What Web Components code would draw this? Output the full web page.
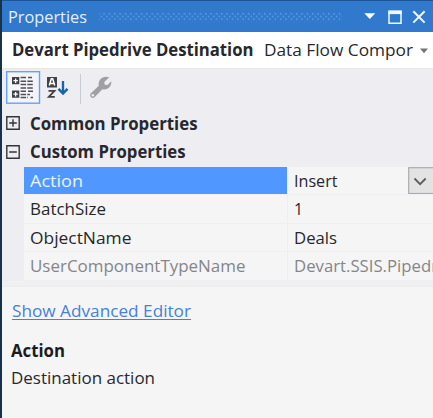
<!DOCTYPE html>
<html lang="en">
<head>
<meta charset="utf-8">
<title>Properties</title>
<style>
html,body{margin:0;width:433px;height:418px;overflow:hidden;font-family:"Open Sans","Noto Sans",sans-serif;font-size:17px;color:#28282c;background:#f5f5f5}
</style>
</head>
<body>
<properties-window></properties-window>
<script>
// A line of text condensed horizontally to the given width.
class FitText extends HTMLElement {
  connectedCallback() {
    this.attachShadow({mode:'open'}).innerHTML = `<style>
      :host{display:block;white-space:nowrap;height:24px;line-height:24px;flex:none;width:${this.getAttribute('w')}px}
      span{display:inline-block;transform-origin:0 50%}
      </style><span><slot></slot></span>`;
    const s = this.shadowRoot.querySelector('span');
    s.style.transform = `scaleX(${this.getAttribute('w') / s.getBoundingClientRect().width})`;
  }
}

class TitleBar extends HTMLElement {
  constructor() {
    super();
    this.attachShadow({mode:'open'}).innerHTML = `<style>
      :host{display:flex;box-sizing:border-box;height:32px;border-top:1px solid #1d5596;background:#3079cd;color:#e4f0ff;padding-left:6px;align-items:center}
      svg{display:block;flex:none}
      .grip{margin-left:11px}
      </style>
      <fit-text w="79">Properties</fit-text>
      <svg class="grip" width="256" height="30"><defs><pattern id="d" width="5.35" height="5.35" patternUnits="userSpaceOnUse" patternTransform="translate(0,11)"><rect width="1.5" height="1.5" fill="#629ddd"/><rect x="2.67" y="2.67" width="1.5" height="1.5" fill="#629ddd"/></pattern></defs><rect y="11" x="1" width="243" height="8.2" fill="url(#d)"/></svg>
      <svg width="79" height="30" fill="none" stroke="#f2f8ff"><path d="M10.3 11.2h11l-5.5 5.8z" fill="#fff" stroke="none"/><path d="M35 9.3h12v12h-12z" stroke-width="1.5"/><path d="M34.3 10.4h13.4" stroke-width="3.4"/><path d="M59.3 9.2l11.3 11.4M70.6 9.2L59.3 20.6" stroke-width="2"/></svg>`;
  }
}

class ObjectPicker extends HTMLElement {
  constructor() {
    super();
    this.attachShadow({mode:'open'}).innerHTML = `<style>
      :host{display:flex;box-sizing:border-box;height:37px;background:#fff;border-bottom:1px solid #e7e7ea;padding:6px 0 0 10px}
      b{font-weight:700}
      .type{margin-left:10px}
      svg{margin:8px 0 0 6.5px;flex:none}
      </style>
      <fit-text w="241.5"><b>Devart Pipedrive Destination</b></fit-text>
      <fit-text class="type" w="149">Data Flow Compor</fit-text>
      <svg width="12" height="12"><path d="M1 2.6h8L5 7.2z" fill="#747478"/></svg>`;
  }
}

class PropertyToolbar extends HTMLElement {
  constructor() {
    super();
    this.attachShadow({mode:'open'}).innerHTML = `<style>
      :host{display:block;height:40px;background:#eeeef2}
      svg{display:block}
      </style>
      <svg width="125" height="40" viewBox="2 69 125 40" fill="none">
        <rect x="6.7" y="71.7" width="32.8" height="31.5" fill="#f4f5fb" stroke="#62a2fb" stroke-width="1.4"/>
        <path fill="#424246" d="M12 77h7.3v7.3H12zM12 90.5h7.3v7.3H12z"/>
        <path stroke="#fff" stroke-width="1.3" d="M13.4 80.6h4.5M15.65 78.4v4.5M13.4 94.1h4.5M15.65 91.9v4.5"/>
        <path stroke="#505055" stroke-width="1.5" stroke-dasharray="5.5 1.2" d="M20.6 77.6H26M20.6 81.2H33.5M20.6 84.6H33.5M20.6 88H33.5M20.6 91.3H26M20.6 94.5H28M20.6 97.4H28"/>
        <path stroke="#505055" stroke-width="1.5" d="M28 77.6h4M28 91.3h5M28 94.5h2M30.5 97.4h2.5"/>
        <path fill="#424246" d="M47 77h10v10.5H47z"/>
        <path stroke="#fff" stroke-width="1.5" d="M49.3 85.5l2-6.7h1.4l2 6.7M50.1 83.4h3.8"/>
        <path stroke="#424246" stroke-width="1.8" d="M48.5 90.9h6l-5.7 6h6"/>
        <path stroke="#1765ad" stroke-width="2.3" d="M63 81v11.7"/>
        <path stroke="#1765ad" stroke-width="2.5" d="M58.5 88.8L63 93.4l4.5-4.6"/>
        <path stroke="#cbccd3" d="M80.5 74v30"/>
        <path fill="#a0a0a4" d="M109.3 77.2l-5 4.8.4 2.7 2.8.4 3.8-3.8c.5 5.2-3.6 9.2-8.9 8l-7.6 7.8c-2.8 2.5-6.3-1.1-3.9-3.8l7.9-7.6c-1.2-5.7 4.1-10.7 10.5-8.5z"/>
        <circle cx="92.8" cy="95.3" r="1.2" fill="#eeeef2"/>
      </svg>`;
  }
}

class PropertyCategory extends HTMLElement {
  connectedCallback() {
    const open = this.hasAttribute('open');
    this.attachShadow({mode:'open'}).innerHTML = `<style>
      :host{display:flex;height:29px;background:#eeeef2;align-items:flex-start;box-sizing:border-box;padding-left:4px}
      svg{flex:none;margin:7px 9px 0 0}
      fit-text{margin-top:${open ? 2 : 3}px}
      b{font-weight:700}
      </style><svg width="15" height="15" fill="none" stroke="#353539" stroke-width="1.4"><path d="M.8.8h12.4v12.4H.8zM3.2 7h7.6${open ? '' : 'M7 3.2v7.6'}"/></svg>
      <fit-text w="${this.getAttribute('w')}"><b><slot></slot></b></fit-text>`;
  }
}

class PropertyRow extends HTMLElement {
  connectedCallback() {
    const sel = this.hasAttribute('selected');
    this.attachShadow({mode:'open'}).innerHTML = `<style>
      :host{display:grid;grid-template-columns:22px 264px 1fr;height:28.4px;background:#f5f5f5;overflow:hidden}
      :host([disabled]){color:#858589}
      .gutter{background:#eeeef2}
      .name,.value{box-sizing:border-box;display:flex;border-bottom:1px solid #efeff2;padding-left:6px;min-width:0;overflow:hidden}
      .name{border-right:1px solid #efeff2}
      :host([selected]) .name{background:linear-gradient(#5098ff,#5098ff) 0 0/100% 27px no-repeat;color:#eaf5ff}
      fit-text{margin-top:2px}
      svg{flex:none;margin-left:auto}
      </style>
      <div class="gutter"></div>
      <div class="name"><fit-text w="${this.getAttribute('nw')}"><slot name="name"></slot></fit-text></div>
      <div class="value"><fit-text w="${this.getAttribute('vw')}"><slot></slot></fit-text>
      ${sel ? '<svg width="25" height="28" fill="none"><rect x=".7" y=".7" width="26" height="25.8" fill="#e3e3e3" stroke="#acacae" stroke-width="1.2"/><path d="M6.5 11.5l5.6 5.7 5.6-5.7" stroke="#5d5d61" stroke-width="1.8"/></svg>' : ''}</div>`;
  }
}

class DescriptionPane extends HTMLElement {
  constructor() {
    super();
    this.attachShadow({mode:'open'}).innerHTML = `<style>
      :host{display:block;flex:1;background:#f5f5f5;border-top:1px solid #ececec;padding:12px 0 0 9px}
      .link{color:#4681d5;margin-left:1px}
      .link a{text-decoration:underline;text-decoration-thickness:1.3px;text-underline-offset:2px;text-decoration-skip-ink:none}
      .heading{margin-top:16px}
      .body{margin-top:3px}
      b{color:#1c1c20}
      </style>
      <fit-text class="link" w="179"><a>Show Advanced Editor</a></fit-text>
      <fit-text class="heading" w="54"><b>Action</b></fit-text>
      <fit-text class="body" w="144">Destination action</fit-text>`;
  }
}

class PropertiesWindow extends HTMLElement {
  constructor() {
    super();
    this.attachShadow({mode:'open'}).innerHTML = `<style>
      :host{display:flex;flex-direction:column;box-sizing:border-box;width:433px;height:418px;border-left:2px solid #17334b;overflow:hidden}
      .rows{height:119px;box-sizing:border-box;padding-bottom:5px;background:#f0f0f3}
      </style>
      <title-bar></title-bar>
      <object-picker></object-picker>
      <property-toolbar></property-toolbar>
      <property-category w="167.5">Common Properties</property-category>
      <property-category open w="155.5">Custom Properties</property-category>
      <div class="rows">
      <property-row selected nw="53" vw="43.5"><span slot="name">Action</span>Insert</property-row>
      <property-row nw="76" vw="9"><span slot="name">BatchSize</span>1</property-row>
      <property-row nw="101.5" vw="43"><span slot="name">ObjectName</span>Deals</property-row>
      <property-row disabled nw="215.5" vw="144"><span slot="name">UserComponentTypeName</span>Devart.SSIS.Pipedr</property-row>
      </div>
      <description-pane></description-pane>`;
  }
}

customElements.define('fit-text', FitText);
customElements.define('title-bar', TitleBar);
customElements.define('object-picker', ObjectPicker);
customElements.define('property-toolbar', PropertyToolbar);
customElements.define('property-category', PropertyCategory);
customElements.define('property-row', PropertyRow);
customElements.define('description-pane', DescriptionPane);
customElements.define('properties-window', PropertiesWindow);
</script>
</body>
</html>
